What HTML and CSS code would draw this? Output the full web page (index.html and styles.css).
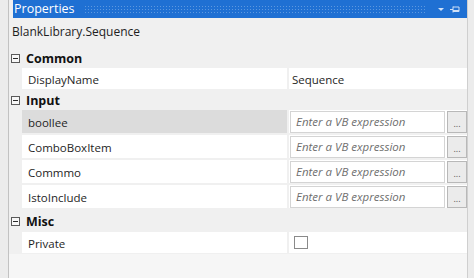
FILE: index.html
```html
<!DOCTYPE html>
<html>
<head>
<meta charset="utf-8">
<link rel="stylesheet" href="styles.css">
</head>
<body>
<div class="frame">
  <div class="panel">
    <div class="titlebar">
      <span class="title">Properties</span>
      <span class="dots"></span>
      <svg class="tb-icon" width="10" height="8" viewBox="0 0 10 8"><path d="M2 3 L8 3 L5 6 Z" fill="#cfe0f7"/></svg>
      <svg class="tb-icon" width="12" height="10" viewBox="0 0 12 10"><path d="M1 5.5 H4 M4 2.5 V8.5 M4 3 H10 V7.5 H4 M4 6.5 H10" stroke="#cfe0f7" stroke-width="1" fill="none"/></svg>
    </div>
    <div class="typename">BlankLibrary.Sequence</div>

    <div class="cat">
      <span class="minus"></span><span class="cat-label">Common</span>
    </div>
    <div class="row short">
      <div class="name">DisplayName</div>
      <div class="value"><span class="val-text">Sequence</span></div>
    </div>

    <div class="cat">
      <span class="minus"></span><span class="cat-label">Input</span>
    </div>
    <div class="row selected">
      <div class="name">boollee</div>
      <div class="value"><div class="expr">Enter a VB expression</div><div class="btn">...</div></div>
    </div>
    <div class="row">
      <div class="name">ComboBoxItem</div>
      <div class="value"><div class="expr">Enter a VB expression</div><div class="btn">...</div></div>
    </div>
    <div class="row">
      <div class="name">Commmo</div>
      <div class="value"><div class="expr">Enter a VB expression</div><div class="btn">...</div></div>
    </div>
    <div class="row">
      <div class="name">IstoInclude</div>
      <div class="value"><div class="expr">Enter a VB expression</div><div class="btn">...</div></div>
    </div>

    <div class="cat misc">
      <span class="minus"></span><span class="cat-label">Misc</span>
    </div>
    <div class="row short">
      <div class="name">Private</div>
      <div class="value"><span class="checkbox"></span></div>
    </div>
    <div class="rest"></div>
  </div>
</div>
</body>
</html>
```

FILE: styles.css
```css
* { box-sizing: border-box; }
html, body {
  margin: 0;
  padding: 0;
  height: 100%;
}
body {
  background: #ececec;
  font-family: "Open Sans", "Noto Sans", sans-serif;
  font-size: 11.5px;
  color: #1e1e1e;
  overflow: hidden;
}
.frame {
  padding-left: 8px;
  width: 468px;
  height: 278px;
}
.panel {
  height: 100%;
  border-left: 1px solid #c2c2c2;
  border-right: 1px solid #cfcfcf;
  background: #f0f0f0;
  display: flex;
  flex-direction: column;
}
.titlebar {
  margin-left: 4px;
  height: 18px;
  flex: none;
  background: #1f70d3;
  display: flex;
  align-items: center;
  padding-right: 6px;
  gap: 3px;
}
.title {
  color: #ffffff;
  font-size: 12.5px;
  padding-left: 1px;
  line-height: 18px;
}
.dots {
  flex: 1;
  height: 8px;
  margin: 0 6px 0 6px;
  background-image: radial-gradient(circle, rgba(255,255,255,0.28) 0.7px, transparent 0.9px);
  background-size: 3px 3px;
}
.tb-icon { display: block; }
.typename {
  height: 30px;
  flex: none;
  line-height: 28px;
  padding-left: 3px;
  font-size: 12px;
}
.cat {
  height: 20px;
  flex: none;
  display: flex;
  align-items: center;
  padding-left: 2px;
}
.row + .cat { margin-top: 1px; }
.misc { height: 21px; }
.minus {
  width: 9px;
  height: 9px;
  border: 1px solid #5a5a5a;
  position: relative;
  margin-right: 6px;
  background: #f7f7f7;
}
.minus::after {
  content: "";
  position: absolute;
  left: 1px;
  right: 1px;
  top: 3px;
  height: 1px;
  background: #2a2a2a;
}
.cat-label {
  font-weight: bold;
  font-size: 12.5px;
  color: #111;
}
.row {
  margin-left: 13px;
  height: 23px;
  flex: none;
  display: grid;
  grid-template-columns: 265px 1fr;
  column-gap: 2px;
  margin-bottom: 2px;
}
.row.short {
  height: 21px;
  margin-bottom: 0;
}
.name {
  background: #ffffff;
  padding-left: 6px;
  padding-top: 1px;
  display: flex;
  align-items: center;
}
.selected .name { background: #dcdcdc; }
.value {
  background: #ffffff;
  display: flex;
  align-items: center;
  padding-left: 1px;
}
.val-text { padding-left: 2px; padding-top: 1px; }
.expr {
  width: 155px;
  height: 22px;
  border: 1px solid #d4d4d4;
  background: #fff;
  font-style: italic;
  color: #6e6e6e;
  padding-left: 5px;
  line-height: 20px;
}
.btn {
  margin-left: 2px;
  width: 20px;
  height: 22px;
  border: 1px solid #b8b8b8;
  background: #ebebeb;
  color: #555;
  font-size: 9px;
  text-align: center;
  line-height: 23px;
}
.checkbox {
  margin-left: 4px;
  width: 14px;
  height: 13px;
  border: 1px solid #8a8a8a;
  background: #fff;
}
.rest {
  flex: 1;
  background: #f6f6f6;
  margin-top: 1px;
}
```
